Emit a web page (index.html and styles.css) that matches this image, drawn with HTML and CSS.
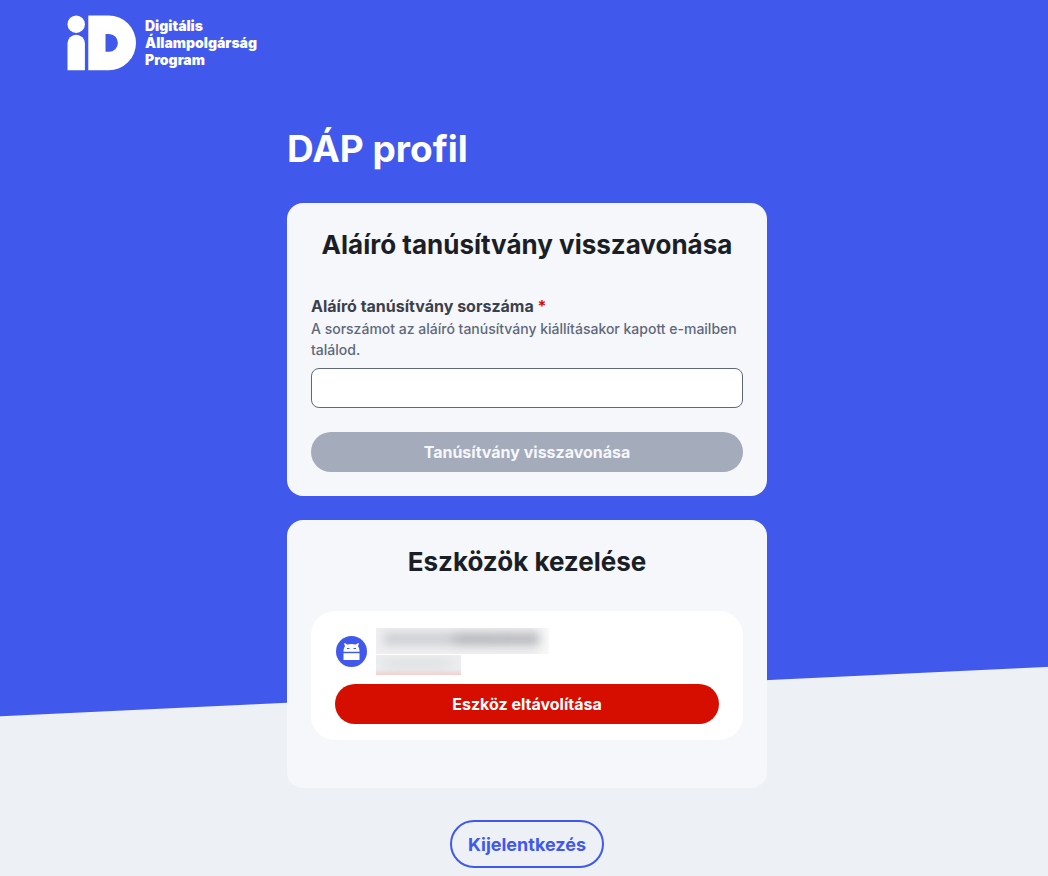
FILE: index.html
```html
<!DOCTYPE html>
<html lang="hu">
<head>
    <meta charset="UTF-8">
    <meta name="viewport" content="width=device-width, initial-scale=1.0">
    <title>DÁP profil</title>
    <link rel="stylesheet" href="styles.css">
</head>
<body>
    <header class="header">
        <a class="brand" href="/">
            <svg class="brand-logo" width="69" height="56" viewBox="0 0 69 56" fill="white" aria-hidden="true">
                <circle cx="9.2" cy="9.2" r="8.7"/>
                <path d="M.5 55.3V28.500a8.700 8.700 0 0 1 17.400 0v26.800z"/>
                <path fill-rule="evenodd" d="M21.3 .5H41.600a27.400 27.400 0 0 1 0 54.800H21.300zM38.500 19v17.800H42a8.900 8.900 0 0 0 0-17.800z"/>
            </svg>
            <span class="brand-name">Digitális<br>Állampolgárság<br>Program</span>
        </a>
    </header>

    <main class="content">
        <h1>DÁP profil</h1>

        <section class="card">
            <h2>Aláíró tanúsítvány visszavonása</h2>
            <form class="form">
                <label for="serial">Aláíró tanúsítvány sorszáma <span class="required">*</span></label>
                <p class="hint" id="serialHint">A sorszámot az aláíró tanúsítvány kiállításakor kapott e-mailben találod.</p>
                <input type="text" id="serial" aria-describedby="serialHint" required>
                <button type="submit" class="btn btn-disabled" disabled>Tanúsítvány visszavonása</button>
            </form>
        </section>

        <section class="card card-devices">
            <h2>Eszközök kezelése</h2>
            <div class="device">
                <div class="device-info">
                    <svg width="32" height="32" viewBox="0 0 32 32" aria-hidden="true">
                        <circle cx="16.5" cy="15.5" r="15.5" fill="#4158EC"/>
                        <path fill="white" d="M8.5 15.8c0-2.400.5-4.200 1.500-5.500L9 7.500l1-.5 2 1.600c2.800-.8 6.200-.8 9 0L23 7l1 .5-1 2.800c1 1.300 1.500 3.100 1.500 5.500z"/>
                        <path fill="white" d="M8.5 17.200h16v6.800h-16z"/>
                        <path stroke="#4158EC" stroke-width="1" d="M12 12.500h2.500M18.500 12.500H21"/>
                    </svg>
                    <div class="device-text">
                        <div class="masked masked-name"></div>
                        <div class="masked masked-date"></div>
                    </div>
                </div>
                <button type="button" class="btn btn-danger">Eszköz eltávolítása</button>
            </div>
        </section>

        <button type="button" class="btn-logout">Kijelentkezés</button>
    </main>
</body>
</html>
```

FILE: styles.css
```css
* {
    box-sizing: border-box;
}

body {
    margin: 0;
    min-height: 100vh;
    font-family: 'Inter', sans-serif;
    font-size: 16px;
    line-height: 24px;
    color: #1B1E25;
    background: linear-gradient(177.3deg, #4158EC 715px, #EDF1F6 716px);
}

h1,
h2,
p {
    margin: 0;
}

.header {
    display: flex;
    padding: 15px 67px 0;
}

.brand {
    display: flex;
    align-items: center;
    gap: 9px;
    color: white;
    text-decoration: none;
}

.brand-name {
    padding-bottom: 2px;
    font-size: 14px;
    font-weight: 900;
    line-height: 17px;
}

.content {
    display: flex;
    flex-direction: column;
    align-items: center;
    gap: 24px;
    padding: 48px 18px 8px 24px;
}

h1 {
    width: 100%;
    max-width: 480px;
    font-size: 37px;
    font-weight: 700;
    line-height: 60px;
    color: white;
}

.card {
    width: 100%;
    max-width: 480px;
    padding: 24px;
    border-radius: 16px;
    background: #F5F7FB;
}

.card h2 {
    margin-bottom: 32px;
    font-size: 26px;
    font-weight: 700;
    line-height: 35px;
    text-align: center;
}

.card-devices {
    padding-bottom: 48px;
}

.form label {
    display: block;
    font-weight: 700;
    color: #3C404B;
}

.required {
    color: #D60E00;
}

.hint {
    margin-bottom: 8px;
    font-size: 14px;
    font-weight: 500;
    line-height: 21px;
    color: #5F687B;
}

.form input {
    display: block;
    width: 100%;
    height: 40px;
    margin-bottom: 24px;
    padding: 0 12px;
    font: inherit;
    border: 1px solid #5F687B;
    border-radius: 8px;
    background: white;
}

.btn {
    display: block;
    width: 100%;
    height: 40px;
    border: none;
    border-radius: 20px;
    font-family: inherit;
    font-size: 16px;
    font-weight: 700;
    cursor: pointer;
}

.btn-disabled {
    background: #A4ABBB;
    color: #F5F7FB;
    cursor: default;
}

.btn-danger {
    background: #D60E00;
    color: white;
}

.device {
    padding: 16px 24px;
    border-radius: 24px;
    background: white;
}

.device-info {
    display: flex;
    align-items: center;
    gap: 9px;
    height: 49px;
    margin-bottom: 8px;
}

.device-text {
    display: grid;
    gap: 1px;
}

.masked {
    overflow: hidden;
}

.masked::before {
    content: '';
    display: block;
    filter: blur(5px);
}

.masked-name {
    width: 173px;
    height: 26px;
    background: linear-gradient(90deg, #EFEFF1 90%, #F9F9FA);
}

.masked-name::before {
    height: 12px;
    margin: 5px 10px 0 8px;
    background: linear-gradient(90deg, #CDCFD2 40%, #B4B6B9 50%, #B9BABD);
}

.masked-date {
    width: 85px;
    height: 20px;
    background: linear-gradient(#EBEDEE 70%, #F3CFCD);
}

.masked-date::before {
    height: 6px;
    margin: 6px 12px 0 8px;
    background: #DADDDF;
}

.btn-logout {
    height: 48px;
    margin-top: 8px;
    padding: 0 16px;
    border: 2px solid #4158EC;
    border-radius: 24px;
    background: transparent;
    color: #4158EC;
    font-family: inherit;
    font-size: 18px;
    font-weight: 700;
    cursor: pointer;
}
```
